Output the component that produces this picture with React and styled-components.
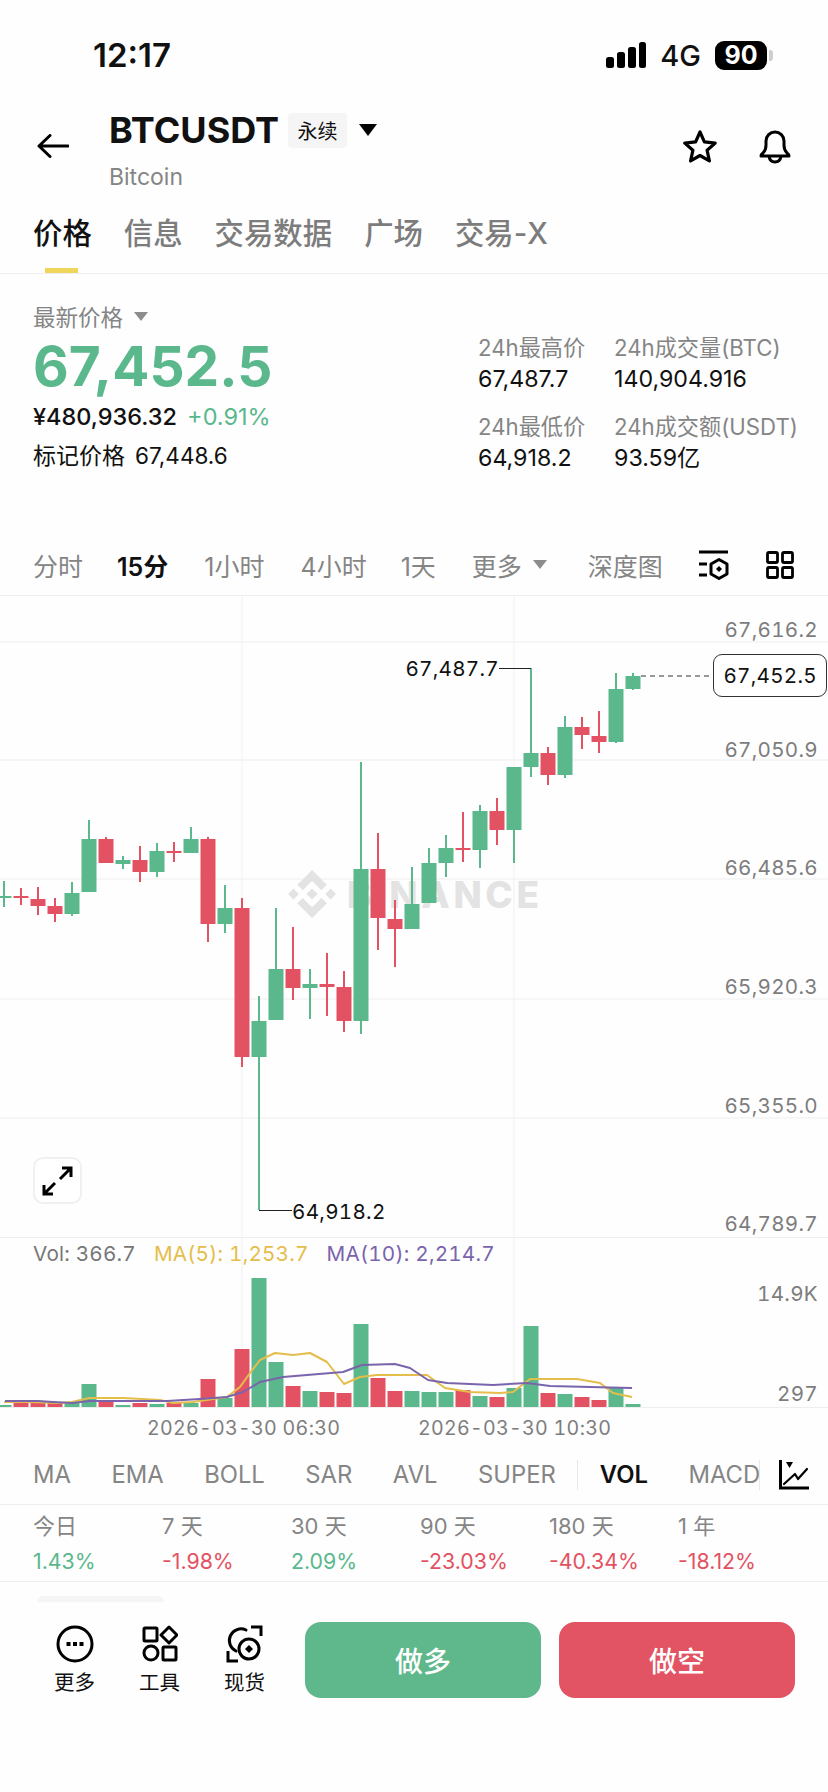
import React from 'react';
import styled, { createGlobalStyle } from 'styled-components';

const GREEN = '#5ab88c';
const RED = '#e35262';
const GREY = '#858585';
const FONT = 'Inter, "Noto Sans CJK SC", sans-serif';

const GlobalStyle = createGlobalStyle`
  html, body { margin: 0; padding: 0; background: #fff; }
  body { font-family: ${FONT}; color: #111; }
`;

// [up, wickTop, wickBottom, bodyTop, bodyBottom], spaced 17px apart from x=4
const CANDLES = [
  [1, 881, 907, 896, 898], [0, 888, 905, 896, 898], [0, 887, 915, 899, 906], [0, 898, 922, 906, 914],
  [1, 882, 916, 893, 914], [1, 820, 892, 839, 892], [0, 837, 863, 839, 863], [1, 856, 869, 860, 864],
  [0, 846, 882, 860, 872], [1, 843, 877, 851, 872], [0, 842, 862, 851, 853], [1, 827, 853, 839, 853],
  [0, 837, 942, 839, 924], [1, 885, 933, 908, 924], [0, 898, 1067, 908, 1057], [1, 996, 1210, 1021, 1057],
  [1, 908, 1020, 969, 1020], [0, 927, 1000, 969, 988], [1, 969, 1019, 984, 988], [0, 953, 1016, 984, 987],
  [0, 971, 1032, 987, 1021], [1, 762, 1034, 869, 1021], [0, 833, 950, 869, 918], [0, 900, 967, 919, 929],
  [1, 867, 929, 904, 929], [1, 848, 903, 863, 903], [1, 835, 877, 848, 863], [0, 812, 862, 848, 850],
  [1, 805, 868, 811, 850], [0, 798, 845, 811, 830], [1, 767, 863, 767, 830], [1, 668, 777, 753, 767],
  [0, 747, 785, 753, 775], [1, 716, 778, 727, 775], [0, 717, 749, 727, 735], [0, 711, 753, 736, 742],
  [1, 673, 743, 689, 742], [1, 673, 690, 676, 689],
];

const VOLUMES = [
  1405, 1402, 1402, 1402, 1402, 1384, 1401, 1405, 1403, 1404, 1403, 1403, 1379, 1398, 1349, 1278, 1362, 1386, 1391,
  1392, 1393, 1324, 1378, 1391, 1391, 1392, 1392, 1390, 1396, 1397, 1388, 1326, 1393, 1394, 1397, 1400, 1388, 1404,
];

const MA5 =
  '4,1402 30,1402 57,1403 72,1402 89,1398 123,1398 160,1400 173,1403 193,1402 227,1397 240,1387 250,1373 260,1360 275,1353 293,1355 310,1353 327,1362 344,1384 360,1377 377,1375 427,1375 445,1388 470,1392 500,1393 513,1392 530,1379 577,1379 600,1383 613,1393 632,1397';
const MA10 =
  '5,1401 38,1401 53,1402 72,1403 90,1401 167,1401 200,1399 227,1397 243,1392 260,1382 283,1377 343,1372 362,1365 395,1364 410,1368 428,1380 447,1383 493,1385 527,1383 550,1386 590,1387 632,1388';

const PRICE_AXIS = [
  ['67,616.2', 637], ['67,050.9', 757], ['66,485.6', 875], ['65,920.3', 994], ['65,355.0', 1113], ['64,789.7', 1231],
];

const PERFORMANCE = [
  ['今日', '1.43%', true], ['7 天', '-1.98%', false], ['30 天', '2.09%', true],
  ['90 天', '-23.03%', false], ['180 天', '-40.34%', false], ['1 年', '-18.12%', false],
];

const Page = styled.div`
  width: 828px;
  min-height: 1792px;
  background: #fefefe;
  overflow: hidden;
`;

const StatusBar = styled.div`
  height: 110px;
  padding: 0 61px 0 93px;
  display: flex;
  align-items: center;
  justify-content: space-between;
`;

const Clock = styled.div`
  font-size: 33px;
  font-weight: 600;
`;

const StatusRight = styled.div`
  display: flex;
  align-items: center;
  gap: 14px;
`;

const Network = styled.span`
  font-size: 29px;
  font-weight: 500;
`;

const Battery = styled.div`
  position: relative;
  width: 52px;
  height: 29px;
  border-radius: 9px;
  background: #000;
  color: #fff;
  font-size: 25px;
  font-weight: 700;
  display: flex;
  align-items: center;
  justify-content: center;
  &::after {
    content: '';
    position: absolute;
    right: -6px;
    top: 9px;
    width: 4px;
    height: 11px;
    border-radius: 0 3px 3px 0;
    background: #cfcfcf;
  }
`;

const Header = styled.div`
  height: 95px;
  padding: 0 36px 0 37px;
  display: flex;
  align-items: flex-start;
  box-sizing: border-box;
`;

const BackIcon = styled.svg`
  width: 32px;
  height: 24px;
  margin: 24px 40px 0 0;
  flex: none;
`;

const TitleBlock = styled.div`
  flex: 1;
  display: flex;
  flex-direction: column;
  gap: 17px;
  padding-top: 2px;
`;

const TitleRow = styled.div`
  display: flex;
  align-items: center;
  height: 36px;
`;

const Symbol = styled.span`
  font-size: 36px;
  font-weight: 700;
`;

const Badge = styled.span`
  margin: 0 12px 0 9px;
  width: 59px;
  height: 35px;
  background: #f5f5f5;
  border-radius: 4px;
  font-size: 20px;
  display: flex;
  align-items: center;
  justify-content: center;
`;

const Triangle = styled.span`
  display: inline-block;
  flex: none;
  border-left: ${(p) => p.$w / 2}px solid transparent;
  border-right: ${(p) => p.$w / 2}px solid transparent;
  border-top: ${(p) => p.$h}px solid ${(p) => p.$color};
`;

const Subtitle = styled.span`
  font-size: 23px;
  color: ${GREY};
  line-height: 24px;
`;

const HeaderActions = styled.div`
  display: flex;
  align-items: center;
  gap: 40px;
  margin-top: 20px;
`;

const Tabs = styled.div`
  position: relative;
  height: 69px;
  padding: 0 0 0 33px;
  display: flex;
  gap: 32px;
  box-sizing: border-box;
  border-bottom: 1px solid #eeeeee;
`;

const Tab = styled.span`
  position: relative;
  height: 68px;
  line-height: 58px;
  font-size: 29.4px;
  font-weight: 500;
  color: ${(p) => (p.$active ? '#111' : '#7c7c7c')};
  ${(p) =>
    p.$active &&
    `&::after {
      content: '';
      position: absolute;
      left: 12px;
      bottom: 0;
      width: 33px;
      height: 5px;
      background: #f0d55b;
    }`}
`;

const Stats = styled.div`
  height: 260px;
  padding: 0 33px;
  box-sizing: border-box;
  display: flex;
  justify-content: space-between;
`;

const PriceColumn = styled.div`
  display: flex;
  flex-direction: column;
  padding-top: 30px;
`;

const LatestLabel = styled.div`
  display: flex;
  align-items: center;
  gap: 11px;
  height: 24px;
  font-size: 22.5px;
  color: ${GREY};
`;

const LastPrice = styled.div`
  margin-top: 8px;
  height: 60px;
  line-height: 60px;
  font-size: 55px;
  font-weight: 700;
  color: ${GREEN};
`;

const FiatRow = styled.div`
  margin-top: 7px;
  height: 28px;
  line-height: 28px;
  display: flex;
  gap: 10px;
  font-size: 23.5px;
  font-weight: 500;
`;

const Change = styled.span`
  color: ${GREEN};
  font-weight: 400;
`;

const MarkRow = styled.div`
  margin-top: 11px;
  height: 28px;
  line-height: 28px;
  display: flex;
  gap: 10px;
  font-size: 23px;
  span:last-child { font-size: 22.5px; }
`;

const DayGrid = styled.div`
  margin: 62px -3px 0 0;
  display: grid;
  grid-template-columns: 136px 184px;
  grid-auto-rows: min-content;
  row-gap: 24px;
`;

const DayCell = styled.div`
  display: flex;
  flex-direction: column;
  gap: 7px;
`;

const DayLabel = styled.span`
  font-size: 22.2px;
  line-height: 24px;
  color: ${GREY};
  white-space: nowrap;
`;

const DayValue = styled.span`
  font-size: 23.2px;
  line-height: 24px;
`;

const TimeRow = styled.div`
  height: 62px;
  padding-left: 33px;
  box-sizing: border-box;
  display: flex;
  align-items: center;
  border-bottom: 1px solid #eeeeee;
`;

const TimeItem = styled.span`
  margin-right: ${(p) => p.$gap}px;
  display: flex;
  align-items: center;
  gap: 11px;
  font-size: 25px;
  font-weight: ${(p) => (p.$active ? 600 : 400)};
  color: ${(p) => (p.$active ? '#111' : GREY)};
  white-space: nowrap;
`;

const ChartPanel = styled.div`
  position: relative;
  height: 641px;
`;

const Drawing = styled.svg`
  display: block;
  width: 828px;
`;

const AxisText = styled.text`
  font-family: ${FONT};
  font-size: ${(p) => p.$size || 20.6}px;
  font-variant-numeric: tabular-nums;
  letter-spacing: 0.3px;
  fill: ${(p) => p.$fill || '#7d7d7d'};
`;

const Watermark = styled.text`
  font-family: ${FONT};
  font-size: 37px;
  font-weight: 800;
  fill: #e3e3e3;
`;

const PriceTag = styled.div`
  position: absolute;
  left: 713px;
  top: 58px;
  width: 114px;
  height: 43px;
  box-sizing: border-box;
  padding-right: 9px;
  background: #fff;
  border: 1.5px solid #333;
  border-radius: 9px;
  display: flex;
  align-items: center;
  justify-content: flex-end;
  font-size: 20.6px;
  font-variant-numeric: tabular-nums;
  letter-spacing: 0.3px;
`;

const ExpandButton = styled.div`
  position: absolute;
  left: 33px;
  top: 561px;
  width: 49px;
  height: 47px;
  box-sizing: border-box;
  background: #fff;
  border: 2px solid #f0f0f0;
  border-radius: 10px;
  display: flex;
  align-items: center;
  justify-content: center;
`;

const VolumePanel = styled.div`
  position: relative;
  height: 208px;
  border-top: 1px solid #eeeeee;
  box-sizing: border-box;
`;

const Legend = styled.div`
  position: absolute;
  left: 33px;
  top: 0;
  height: 30px;
  display: flex;
  align-items: center;
  gap: 18px;
  font-size: 20.7px;
  font-variant-numeric: tabular-nums;
  letter-spacing: 0.2px;
`;

const LegendItem = styled.span`
  color: ${(p) => p.$color};
`;

const IndicatorRow = styled.div`
  height: 60px;
  box-sizing: border-box;
  padding-left: 33px;
  display: flex;
  align-items: center;
  border-bottom: 1px solid #eeeeee;
`;

const IndicatorScroll = styled.div`
  width: 726px;
  height: 30px;
  flex: none;
  display: flex;
  align-items: center;
  gap: 40.5px;
  overflow: hidden;
  border-right: 1px solid #e8e8e8;
`;

const Indicator = styled.span`
  flex: none;
  font-size: 23.8px;
  font-weight: ${(p) => (p.$active ? 600 : 400)};
  color: ${(p) => (p.$active ? '#111' : GREY)};
`;

const IndicatorSep = styled.span`
  flex: none;
  width: 1px;
  height: 30px;
  margin: 0 -19px;
  background: #e8e8e8;
`;

const IndicatorIcon = styled.svg`
  flex: none;
  width: 31px;
  height: 30px;
  margin-left: 19px;
`;

const PerfGrid = styled.div`
  height: 77px;
  box-sizing: border-box;
  padding: 8px 0 0 33px;
  display: grid;
  grid-template-columns: repeat(6, 129px);
  border-bottom: 1px solid #eeeeee;
`;

const PerfCell = styled.div`
  display: flex;
  flex-direction: column;
  gap: 9px;
`;

const PerfLabel = styled.span`
  font-size: 22px;
  line-height: 26px;
  color: ${GREY};
`;

const PerfValue = styled.span`
  font-size: 21.3px;
  line-height: 26px;
  color: ${(p) => (p.$up ? GREEN : RED)};
`;

const Placeholder = styled.div`
  width: 127px;
  height: 6px;
  margin: 14px 0 20px 37px;
  border-radius: 6px 6px 0 0;
  background: #f5f5f5;
`;

const BottomBar = styled.div`
  height: 76px;
  padding: 0 32px;
  display: flex;
  align-items: center;
`;

const Tool = styled.div`
  width: 85px;
  flex: none;
  display: flex;
  flex-direction: column;
  align-items: center;
  gap: 7px;
  font-size: 20.5px;
  line-height: 26px;
`;

const TradeButton = styled.div`
  width: 236px;
  height: 76px;
  flex: none;
  margin-left: 18px;
  border-radius: 16px;
  background: ${(p) => p.$color};
  color: #fff;
  font-size: 28px;
  font-weight: 500;
  display: flex;
  align-items: center;
  justify-content: center;
`;

const Line = { fill: 'none', stroke: '#000', strokeWidth: 3, strokeLinecap: 'round', strokeLinejoin: 'round' };

function SignalIcon() {
  return (
    <svg width="40" height="26" viewBox="0 0 40 26">
      <rect x="0" y="15" width="8" height="11" rx="2.5" />
      <rect x="11" y="10" width="8" height="16" rx="2.5" />
      <rect x="22" y="5" width="8" height="21" rx="2.5" />
      <rect x="33" y="0" width="7" height="26" rx="2.5" />
    </svg>
  );
}

function Candle({ index, data }) {
  const [up, wickTop, wickBottom, bodyTop, bodyBottom] = data;
  const x = 4 + index * 17;
  const color = up ? GREEN : RED;
  return (
    <g fill={color}>
      <rect x={x - 1} y={wickTop} width="2" height={wickBottom - wickTop} />
      <rect x={x - 7.5} y={bodyTop} width="15" height={bodyBottom - bodyTop} />
    </g>
  );
}

function PriceChart() {
  return (
    <ChartPanel>
      <Drawing height="641" viewBox="0 596 828 641">
        {[642, 760, 879, 999, 1118].map((y) => (
          <line key={y} x1="0" x2="828" y1={y} y2={y} stroke="#eeeeee" />
        ))}
        <line x1="242" x2="242" y1="596" y2="1237" stroke="#f1f1f1" />
        <line x1="514" x2="514" y1="596" y2="1237" stroke="#f1f1f1" />

        <g transform="translate(288 870) scale(0.38)" fill="#e3e3e3">
          <path d="M38.73 53.2 63.31 28.62l24.6 24.6 14.3-14.31L63.31 0 24.42 38.9z" />
          <path d="M0 63.31l14.3-14.31 14.31 14.31-14.31 14.3z" />
          <path d="M38.73 73.41 63.31 97.99l24.6-24.59 14.31 14.29-38.9 38.91-38.91-38.88-.02-.02z" />
          <path d="M98 63.31l14.3-14.31 14.31 14.3-14.31 14.32z" />
          <path d="M77.83 63.3 63.31 48.78 52.58 59.51l-1.24 1.23-2.54 2.54 14.51 14.5 14.52-14.51z" />
        </g>
        <Watermark x="347" y="908" textLength="192">BINANCE</Watermark>

        {CANDLES.map((c, i) => (
          <Candle key={i} index={i} data={c} />
        ))}

        <line x1="499" x2="531" y1="668.5" y2="668.5" stroke="#222" />
        <line x1="259" x2="292" y1="1210.5" y2="1210.5" stroke="#222" />
        <line x1="641" x2="713" y1="676" y2="676" stroke="#333" strokeWidth="1.2" strokeDasharray="5 4" />

        {PRICE_AXIS.map(([label, y]) => (
          <AxisText key={label} x="818" y={y} textAnchor="end">{label}</AxisText>
        ))}
        <AxisText x="499" y="676" textAnchor="end" $fill="#111">67,487.7</AxisText>
        <AxisText x="292" y="1219" $fill="#111">64,918.2</AxisText>
      </Drawing>
      <PriceTag>67,452.5</PriceTag>
      <ExpandButton>
        <svg width="31" height="30" viewBox="0 0 31 30">
          <path d="M18 13 29 2M20 2h9v9M13 17 2 28M2 19v9h9" {...Line} strokeLinecap="butt" strokeLinejoin="miter" />
        </svg>
      </ExpandButton>
    </ChartPanel>
  );
}

function VolumeChart() {
  return (
    <VolumePanel>
      <Drawing height="207" viewBox="0 1238 828 207">
        <line x1="0" x2="828" y1="1407.5" y2="1407.5" stroke="#eeeeee" />
        <line x1="242" x2="242" y1="1238" y2="1407" stroke="#f1f1f1" />
        <line x1="514" x2="514" y1="1238" y2="1407" stroke="#f1f1f1" />
        {VOLUMES.map((top, i) => (
          <rect
            key={i}
            x={4 + i * 17 - 7.5}
            y={top}
            width="15"
            height={1407 - top}
            fill={CANDLES[i][0] ? GREEN : RED}
          />
        ))}
        <polyline points={MA5} fill="none" stroke="#e5bd4b" strokeWidth="2" strokeLinejoin="round" />
        <polyline points={MA10} fill="none" stroke="#7a64ac" strokeWidth="2" strokeLinejoin="round" />
        <AxisText x="818" y="1301" textAnchor="end">14.9K</AxisText>
        <AxisText x="818" y="1401" textAnchor="end">297</AxisText>
        <AxisText x="147" y="1435" $size={19.6}>2026-03-30 06:30</AxisText>
        <AxisText x="418" y="1435" $size={19.6}>2026-03-30 10:30</AxisText>
      </Drawing>
      <Legend>
        <LegendItem $color="#777">Vol: 366.7</LegendItem>
        <LegendItem $color="#e5bd4b">MA(5): 1,253.7</LegendItem>
        <LegendItem $color="#7a64ac">MA(10): 2,214.7</LegendItem>
      </Legend>
    </VolumePanel>
  );
}

export default function App() {
  return (
    <Page>
      <GlobalStyle />
      <StatusBar>
        <Clock>12:17</Clock>
        <StatusRight>
          <SignalIcon />
          <Network>4G</Network>
          <Battery>90</Battery>
        </StatusRight>
      </StatusBar>

      <Header>
        <BackIcon viewBox="0 0 32 24">
          <path d="M31 12H2M13 1.5 2 12l11 10.5" {...Line} />
        </BackIcon>
        <TitleBlock>
          <TitleRow>
            <Symbol>BTCUSDT</Symbol>
            <Badge>永续</Badge>
            <Triangle $w={19} $h={12} $color="#000" />
          </TitleRow>
          <Subtitle>Bitcoin</Subtitle>
        </TitleBlock>
        <HeaderActions>
          <svg width="36" height="34" viewBox="0 0 36 34">
            <polygon
              points="18,2 22.4,11.9 33.2,13.1 25.1,20.3 27.4,30.9 18,25.5 8.6,30.9 10.9,20.3 2.8,13.1 13.6,11.9"
              {...Line}
              strokeWidth="3.2"
            />
          </svg>
          <svg width="34" height="34" viewBox="0 0 34 34">
            <path d="M3 26q0-1.5 2-3 3-3 3-8v-4a9 9 0 0 1 18 0v4q0 5 3 8 2 1.5 2 3z" {...Line} />
            <path d="M11 26.5q1 5.5 6 5.5t6-5.5" {...Line} />
          </svg>
        </HeaderActions>
      </Header>

      <Tabs>
        <Tab $active>价格</Tab>
        <Tab>信息</Tab>
        <Tab>交易数据</Tab>
        <Tab>广场</Tab>
        <Tab>交易-X</Tab>
      </Tabs>

      <Stats>
        <PriceColumn>
          <LatestLabel>
            最新价格
            <Triangle $w={15} $h={9} $color="#8c8c8c" />
          </LatestLabel>
          <LastPrice>67,452.5</LastPrice>
          <FiatRow>
            <span>¥480,936.32</span>
            <Change>+0.91%</Change>
          </FiatRow>
          <MarkRow>
            <span>标记价格</span>
            <span>67,448.6</span>
          </MarkRow>
        </PriceColumn>
        <DayGrid>
          <DayCell>
            <DayLabel>24h最高价</DayLabel>
            <DayValue>67,487.7</DayValue>
          </DayCell>
          <DayCell>
            <DayLabel>24h成交量(BTC)</DayLabel>
            <DayValue>140,904.916</DayValue>
          </DayCell>
          <DayCell>
            <DayLabel>24h最低价</DayLabel>
            <DayValue>64,918.2</DayValue>
          </DayCell>
          <DayCell>
            <DayLabel>24h成交额(USDT)</DayLabel>
            <DayValue>93.59亿</DayValue>
          </DayCell>
        </DayGrid>
      </Stats>

      <TimeRow>
        <TimeItem $gap={34}>分时</TimeItem>
        <TimeItem $gap={36} $active>15分</TimeItem>
        <TimeItem $gap={36}>1小时</TimeItem>
        <TimeItem $gap={34}>4小时</TimeItem>
        <TimeItem $gap={36}>1天</TimeItem>
        <TimeItem $gap={41}>
          更多
          <Triangle $w={15} $h={9} $color="#8c8c8c" />
        </TimeItem>
        <TimeItem $gap={35}>深度图</TimeItem>
        <svg width="32" height="30" viewBox="0 0 32 30" style={{ marginRight: 36 }}>
          <path d="M1 2h29M1 14h8M1 25h8" {...Line} strokeLinecap="butt" />
          <path d="M21 9.5l8 4.5v10l-8 4.5-8-4.5V14z" {...Line} />
          <path d="M21 16l3 3-3 3-3-3z" fill="#000" />
        </svg>
        <svg width="28" height="28" viewBox="0 0 28 28">
          <g {...Line} strokeWidth="2.8">
            <rect x="1.5" y="1.5" width="10" height="10" rx="1.5" />
            <rect x="16.5" y="1.5" width="10" height="10" rx="1.5" />
            <rect x="1.5" y="16.5" width="10" height="10" rx="1.5" />
            <rect x="16.5" y="16.5" width="10" height="10" rx="1.5" />
          </g>
        </svg>
      </TimeRow>

      <PriceChart />
      <VolumeChart />

      <IndicatorRow>
        <IndicatorScroll>
          <Indicator>MA</Indicator>
          <Indicator>EMA</Indicator>
          <Indicator>BOLL</Indicator>
          <Indicator>SAR</Indicator>
          <Indicator>AVL</Indicator>
          <Indicator>SUPER</Indicator>
          <IndicatorSep />
          <Indicator $active>VOL</Indicator>
          <Indicator>MACD</Indicator>
        </IndicatorScroll>
        <IndicatorIcon viewBox="0 0 31 30">
          <path d="M1.5 0v28H30" {...Line} strokeLinecap="butt" strokeLinejoin="miter" />
          <path d="M7 2h7l-3.5 6z" fill="#000" />
          <path d="M5 24 16 14l3 5 9-10" {...Line} strokeWidth="2.2" />
        </IndicatorIcon>
      </IndicatorRow>

      <PerfGrid>
        {PERFORMANCE.map(([label, value, up]) => (
          <PerfCell key={label}>
            <PerfLabel>{label}</PerfLabel>
            <PerfValue $up={up}>{value}</PerfValue>
          </PerfCell>
        ))}
      </PerfGrid>

      <Placeholder />

      <BottomBar>
        <Tool>
          <svg width="38" height="38" viewBox="0 0 38 38">
            <circle cx="19" cy="19" r="17" {...Line} />
            <path d="M10.5 17h4v4h-4zM17 17h4v4h-4zM23.5 17h4v4h-4z" fill="#000" />
          </svg>
          更多
        </Tool>
        <Tool>
          <svg width="36" height="38" viewBox="0 0 36 38">
            <g {...Line}>
              <rect x="2" y="3" width="13" height="13" rx="1" />
              <path d="M27 2l8 8-8 8-8-8z" />
              <circle cx="9" cy="28" r="7" />
              <rect x="21" y="22" width="13" height="13" rx="1" />
            </g>
          </svg>
          工具
        </Tool>
        <Tool>
          <svg width="37" height="38" viewBox="0 0 37 38">
            <g {...Line}>
              <path d="M25 2h10v9M2 26v10h10" strokeLinecap="butt" strokeLinejoin="miter" />
              <circle cx="23" cy="24" r="10" />
              <path d="M10 26A10 10 0 0 1 20 5" />
            </g>
            <path d="M23 20l4 4-4 4-4-4z" fill="#000" />
          </svg>
          现货
        </Tool>
        <TradeButton $color="#5fb88c">做多</TradeButton>
        <TradeButton $color="#e25463">做空</TradeButton>
      </BottomBar>
    </Page>
  );
}
